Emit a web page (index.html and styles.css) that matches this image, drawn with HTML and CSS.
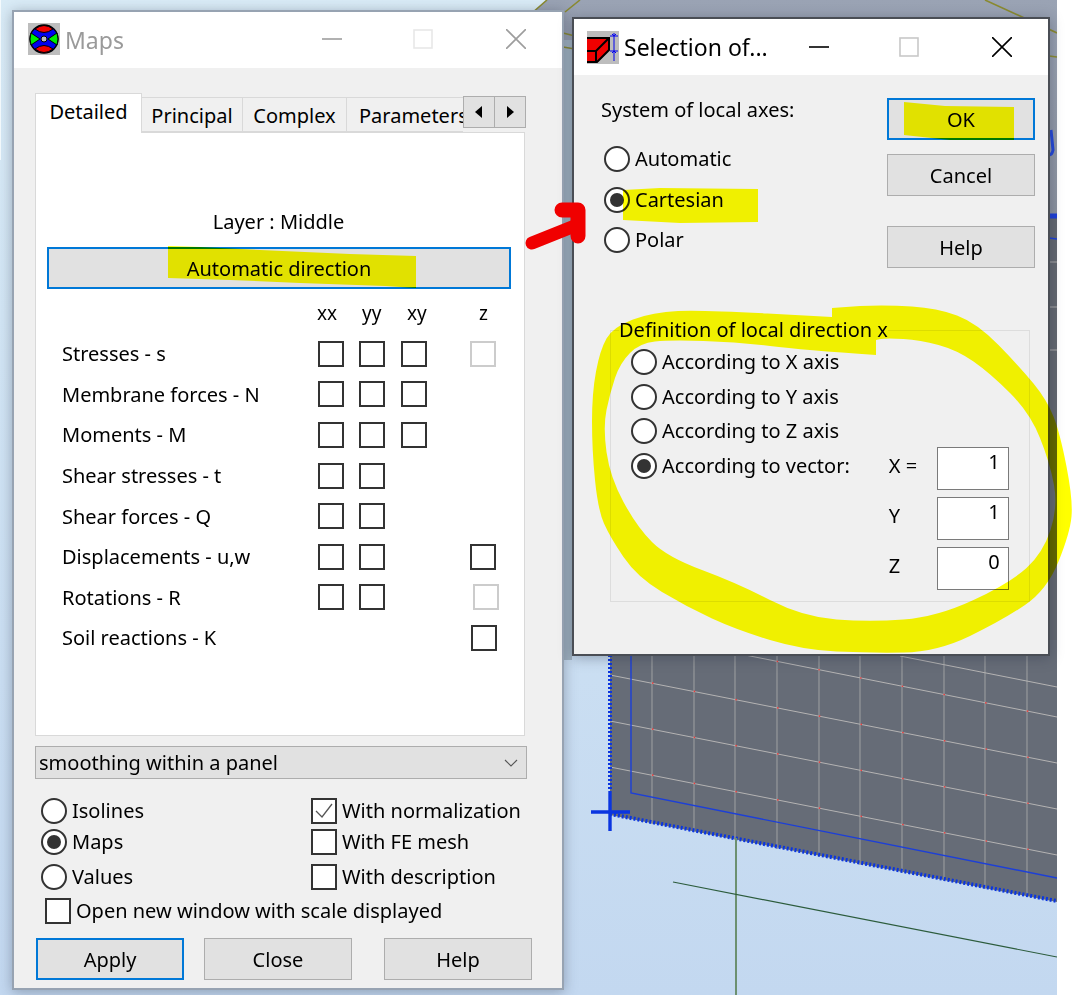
FILE: index.html
```html
<!DOCTYPE html>
<html lang="en">
<head>
<meta charset="utf-8">
<title>Maps</title>
<link rel="stylesheet" href="styles.css">
</head>
<body>
<div class="desktop">
  <svg class="scene" width="1057" height="995" viewBox="0 0 1057 995">
    <defs>
      <linearGradient id="sky" x1="0" y1="0" x2="0" y2="1">
        <stop offset="0" stop-color="#d9ebf6"/>
        <stop offset="1" stop-color="#c3d8f0"/>
      </linearGradient>
      <linearGradient id="haze" x1="0" y1="0" x2="0" y2="1">
        <stop offset="0" stop-color="#9aa3b4"/>
        <stop offset="1" stop-color="#8a919e"/>
      </linearGradient>
    </defs>
    <rect width="1057" height="995" fill="url(#sky)"/>
    <rect x="0" y="0" width="1" height="160" fill="#f4fafd"/>
    <polygon points="532,13 547,0 1057,0 1057,218 572,218 572,40 563,40 563,13" fill="url(#haze)"/>
    <rect x="563" y="40" width="9" height="620" fill="#a3b6c4"/>
    <rect x="1049" y="218" width="8" height="442" fill="#62676f"/>
    <polygon points="610,640 1057,640 1057,902 610,815" fill="#666c77"/>
    <g stroke="#8f9296" stroke-width="1.4">
      <path d="M652 650V824M694 650V832M735 650V840M777 650V849M819 650V857M860 650V865M902 650V873M944 650V881M985 650V889M1027 650V897"/>
    </g>
    <g stroke="#b4b3b3" stroke-width="1" fill="none">
      <path d="M610 675L1057 763M610 721L1057 809M610 767L1057 855M735 653L1057 717M900 656L1057 687"/>
    </g>
    <g stroke="#ee3a3a" stroke-width="1.4" fill="none" stroke-dasharray="1.5 41">
      <path d="M652 683L1057 763M652 729L1057 809M652 775L1057 855M735 653L1057 717"/>
    </g>
    <path d="M631 655V793L1057 878" stroke="#1c3fd8" stroke-width="1.4" fill="none"/>
    <path d="M610 655V790" stroke="#0a35e0" stroke-width="4" stroke-dasharray="2 2" fill="none"/>
    <path d="M610 814L1057 901" stroke="#0a35e0" stroke-width="4" stroke-dasharray="2 2" fill="none"/>
    <path d="M591 812H630M610 791V831" stroke="#0a35e0" stroke-width="3.4" fill="none"/>
    <path d="M736 838V995" stroke="#6c9070" stroke-width="2"/>
    <path d="M673 882L1057 957" stroke="#2c5c3c" stroke-width="1.2"/>
    <g stroke="#8a8a30" stroke-width="1.6" fill="none">
      <path d="M532 13L547 0M565 12L580 0M985 0L1057 33M563 33L575 36M563 47L575 49M1049 56L1057 57"/>
    </g>
    <path d="M1051 130L1053 150Q1052 155 1049 155" stroke="#2246d8" stroke-width="3" fill="none"/>
    <path d="M1049 216H1057" stroke="#1c3fd8" stroke-width="5"/>
    <path d="M1049 238L1057 239" stroke="#1c3fd8" stroke-width="1.4"/>
    <path d="M1049 262H1057M1049 307H1057M1049 350H1057" stroke="#a8a8a8" stroke-width="1"/>
  </svg>

  <section class="win win-maps">
    <header class="titlebar titlebar-idle">
      <svg class="app-icon" width="32" height="32" viewBox="0 0 32 32">
        <rect width="32" height="32" fill="#bdbdbd"/>
        <circle cx="16" cy="16" r="14" fill="#0000f0" stroke="#000" stroke-width="1.4"/>
        <path d="M7 6Q16 13 25 6Q16 -1 7 6ZM7 26Q16 19 25 26Q16 33 7 26Z" fill="#f00000" stroke="#000" stroke-width="1"/>
        <path d="M3 10L12 16L3 22Q1 16 3 10ZM29 10L20 16L29 22Q31 16 29 10Z" fill="#00ee00" stroke="#000" stroke-width="1"/>
        <circle cx="16" cy="16" r="3" fill="#bdbdbd" stroke="#000" stroke-width="1"/>
      </svg>
      <h1 class="title">Maps</h1>
      <div class="caption-btns caption-maps">
        <svg width="20" height="20" viewBox="0 0 20 20"><path d="M0 10H20" stroke="#9d9d9d" stroke-width="1.6"/></svg>
        <svg width="20" height="20" viewBox="0 0 20 20"><rect x="1" y="1" width="18" height="18" fill="none" stroke="#e8e8e8" stroke-width="1.6"/></svg>
        <svg width="20" height="20" viewBox="0 0 20 20"><path d="M0 0L20 20M20 0L0 20" stroke="#9d9d9d" stroke-width="1.6"/></svg>
      </div>
    </header>
    <div class="win-body maps-body">
      <div class="tabs">
        <div class="tab tab-active">Detailed</div>
        <div class="tab tab-principal">Principal</div>
        <div class="tab tab-complex">Complex</div>
        <div class="tab tab-params">Parameters</div>
        <div class="spin">
          <span class="spin-btn"><svg width="8" height="12" viewBox="0 0 8 12"><path d="M7 0V12L0 6Z"/></svg></span>
          <span class="spin-btn"><svg width="8" height="12" viewBox="0 0 8 12"><path d="M1 0V12L8 6Z"/></svg></span>
        </div>
      </div>
      <div class="panel">
        <p class="layer">Layer : Middle</p>
        <button class="btn btn-focus btn-wide" type="button">Automatic direction</button>
        <div class="matrix">
          <span class="mh mh-xx">xx</span><span class="mh mh-yy">yy</span><span class="mh mh-xy">xy</span><span class="mh mh-z">z</span>

          <span class="ml">Stresses - s</span><i class="cb"></i><i class="cb"></i><i class="cb"></i><i class="cb cb-off"></i>
          <span class="ml">Membrane forces - N</span><i class="cb"></i><i class="cb"></i><i class="cb"></i><b></b>
          <span class="ml">Moments - M</span><i class="cb"></i><i class="cb"></i><i class="cb"></i><b></b>
          <span class="ml">Shear stresses - t</span><i class="cb"></i><i class="cb"></i><b></b><b></b>
          <span class="ml">Shear forces - Q</span><i class="cb"></i><i class="cb"></i><b></b><b></b>
          <span class="ml">Displacements - u,w</span><i class="cb"></i><i class="cb"></i><b></b><i class="cb"></i>
          <span class="ml">Rotations - R</span><i class="cb"></i><i class="cb"></i><b></b><i class="cb cb-off cb-r"></i>
          <span class="ml">Soil reactions - K</span><b></b><b></b><b></b><i class="cb cb-k"></i>
        </div>
      </div>
      <div class="combo">
        <span>smoothing within a panel</span>
        <svg width="14" height="8" viewBox="0 0 14 8"><path d="M1 1L7 7L13 1" fill="none" stroke="#555" stroke-width="1.1"/></svg>
      </div>
      <div class="options">
        <label class="opt"><i class="rd"></i>Isolines</label>
        <label class="opt"><i class="cb"><svg width="22" height="22" viewBox="0 0 22 22"><path d="M3 11L9 17L19 4" fill="none" stroke="#555" stroke-width="1.3"/></svg></i>With normalization</label>
        <label class="opt"><i class="rd rd-on"></i>Maps</label>
        <label class="opt"><i class="cb"></i>With FE mesh</label>
        <label class="opt"><i class="rd"></i>Values</label>
        <label class="opt"><i class="cb"></i>With description</label>
      </div>
      <label class="opt opt-scale"><i class="cb"></i>Open new window with scale displayed</label>
      <div class="actions">
        <button class="btn btn-focus btn-act" type="button">Apply</button>
        <button class="btn btn-act btn-close" type="button">Close</button>
        <button class="btn btn-act btn-help" type="button">Help</button>
      </div>
    </div>
  </section>

  <section class="win win-sel">
    <header class="titlebar titlebar-sel">
      <svg class="app-icon" width="32" height="33" viewBox="0 0 32 33">
        <rect width="32" height="33" fill="#bdbdbd"/>
        <path d="M0 7H23V18L11 31H0Z" fill="#f00000"/>
        <path d="M0 7H22V19L10 31H0M0 20H9L22 7M9 20V31" fill="none" stroke="#000" stroke-width="2"/>
        <path d="M27 2V30M23 5H31M23 20H31M25 3L27 5L29 3M25 22L27 20L29 22" fill="none" stroke="#0000f0" stroke-width="1"/>
      </svg>
      <h1 class="title">Selection of...</h1>
      <div class="caption-btns caption-sel">
        <svg width="20" height="20" viewBox="0 0 20 20"><path d="M0 10H20" stroke="#000" stroke-width="1.6"/></svg>
        <svg width="20" height="20" viewBox="0 0 20 20"><rect x="1" y="1" width="18" height="18" fill="none" stroke="#c8c8c8" stroke-width="1.6"/></svg>
        <svg width="20" height="20" viewBox="0 0 20 20"><path d="M0 0L20 20M20 0L0 20" stroke="#000" stroke-width="1.6"/></svg>
      </div>
    </header>
    <div class="win-body sel-body">
      <div class="sel-top">
        <div class="axes">
          <p class="axes-title">System of local axes:</p>
          <label class="opt axes-opt"><i class="rd"></i>Automatic</label>
          <label class="opt axes-opt"><i class="rd rd-on"></i>Cartesian</label>
          <label class="opt axes-opt"><i class="rd"></i>Polar</label>
        </div>
        <div class="sel-btns">
          <button class="btn btn-focus btn-act" type="button">OK</button>
          <button class="btn btn-act" type="button">Cancel</button>
          <button class="btn btn-act btn-sel-help" type="button">Help</button>
        </div>
      </div>
      <fieldset class="group">
        <legend>Definition of local direction x</legend>
        <label class="opt dir-opt"><i class="rd"></i>According to X axis</label>
        <label class="opt dir-opt"><i class="rd"></i>According to Y axis</label>
        <label class="opt dir-opt"><i class="rd"></i>According to Z axis</label>
        <div class="vector">
          <label class="opt dir-opt"><i class="rd rd-on"></i>According to vector:</label>
          <div class="coords">
            <span class="coord-name">X =</span><span class="field">1</span>
            <span class="coord-name">Y</span><span class="field">1</span>
            <span class="coord-name">Z</span><span class="field">0</span>
          </div>
        </div>
      </fieldset>
    </div>
  </section>

  <svg class="marks" width="1073" height="995" viewBox="0 0 1073 995">
    <polygon class="hl" points="168,246 200,247 260,250 350,254 416,256 416,288 385,286 300,283 230,280 168,278"/>
    <polygon class="hl" points="904,102 945,106 1014,107 1014,140 950,140 904,135"/>
    <polygon class="hl" points="623,190 660,188 758,189 758,222 680,223 623,220"/>
    <path class="hl" fill-rule="evenodd" d="M633 319.5Q653 312 678 311Q703 310 767.5 313.5L832 317V308L860 306Q887 305 912 306.5Q937 308 957 315.5Q977 323 998.5 345Q1020 367 1033.5 383.5Q1047 400 1053.5 416.5Q1060 433 1066.5 466.5Q1073 500 1071.5 516.5Q1070 533 1058.5 561.5Q1047 590 1025 605Q1003 620 970 636Q937 652 903.5 652.5Q870 653 836.5 651.5Q803 650 770 640Q737 630 712 618.5Q687 607 662 592Q637 577 623.5 557Q610 537 604 523.5Q598 510 595 480Q592 450 592 421.5Q592 393 596 371.5Q600 350 606.5 338.5Q613 327 633 319.5Z M876 355V340L881 339Q887 338 903.5 339Q920 340 938.5 345Q957 350 973.5 361.5Q990 373 1010 393Q1030 413 1040 438Q1050 463 1054 485Q1058 507 1050.5 530Q1043 553 1026.5 568Q1010 583 973.5 600Q937 617 903.5 619.5Q870 622 836.5 619.5Q803 617 770 600Q737 583 702 570Q667 557 652 542Q637 527 623.5 502Q610 477 606.5 452Q603 427 606.5 410Q610 393 615 378Q620 363 630 353Q640 343 655 341.5Q670 340 703.5 341Q737 342 770 346Q803 350 876 355Z"/>
    <path class="arrow" d="M532 243L577 225"/>
    <path class="arrow arrow-head" d="M562 210H578V236"/>
  </svg>
</div>
</body>
</html>
```

FILE: styles.css
```css
* { box-sizing: border-box; }
html, body { margin: 0; padding: 0; background: #fff; }
body {
  font-family: "Noto Sans", "DejaVu Sans", sans-serif;
  font-size: 20px;
  color: #000;
}
.desktop { position: relative; width: 1073px; height: 995px; overflow: hidden; }
.scene { position: absolute; left: 0; top: 0; }
.marks { position: absolute; left: 0; top: 0; pointer-events: none; }
.hl { fill: #ffff00; mix-blend-mode: multiply; }
.arrow { fill: none; stroke: #f00000; stroke-width: 13px; stroke-linecap: round; stroke-linejoin: round; }
.arrow-head { stroke-width: 15px; }

.win {
  position: absolute;
  background: #f0f0f0;
  box-shadow: 0 2px 12px rgba(40, 50, 70, .35);
  display: flex;
  flex-direction: column;
}
.win-maps { left: 12px; top: 10px; width: 552px; height: 980px; border: 2px solid #97a3b2; }
.win-sel { left: 572px; top: 17px; width: 478px; height: 639px; border: 2px solid #4a4e55; }
.titlebar { background: #fff; display: flex; align-items: center; flex: none; height: 56px; }
.titlebar-idle { padding-left: 14px; }
.titlebar-idle .app-icon { margin-top: -2px; }
.titlebar-sel { padding-left: 13px; }
.title { margin: 0 0 0 5px; font-weight: 400; font-size: 23px; }
.titlebar-idle .title { color: #9a9a9a; }
.caption-btns { margin-left: auto; display: flex; padding-right: 36px; }
.caption-maps { gap: 71px; margin-top: -2px; }
.caption-sel { gap: 70px; }
.caption-btns svg:last-child { margin-left: 2px; }
.caption-sel svg:last-child { margin-left: 3px; }

.win-body { flex: 1; position: relative; }
.maps-body { padding: 25px 0 0 21px; }

.tabs { display: flex; align-items: flex-end; height: 39px; position: relative; z-index: 1; }
.tab {
  flex: none;
  height: 35px;
  padding-top: 4px;
  text-align: center;
  background: #f0f0f0;
  border: 1px solid #d9d9d9;
  border-left: 0;
  white-space: nowrap;
}
.tab-active {
  width: 107px;
  height: 40px;
  margin-bottom: -1px;
  background: #fff;
  border-left: 1px solid #d9d9d9;
  border-bottom: 0;
}
.tab-principal { width: 101px; }
.tab-complex { width: 104px; }
.tab-params { width: 116px; overflow: hidden; text-align: left; padding-left: 12px; border-right: 0; }
.spin { display: flex; flex: none; height: 32px; align-self: flex-start; margin-top: 3px; }
.spin-btn {
  width: 32px;
  height: 32px;
  background: #e1e1e1;
  border: 1px solid #adadad;
  display: flex;
  align-items: center;
  justify-content: center;
}
.spin-btn + .spin-btn { margin-left: -1px; }
.panel {
  width: 490px;
  height: 604px;
  background: #fff;
  border: 1px solid #d9d9d9;
  padding-top: 75px;
  display: flex;
  flex-direction: column;
  align-items: center;
}
.layer { margin: 0 3px 12px 0; line-height: 27px; }
.btn {
  display: flex;
  flex: none;
  align-items: center;
  justify-content: center;
  padding: 0;
  background: #e1e1e1;
  border: 1px solid #adadad;
  font: inherit;
  color: #000;
}
.btn-focus { border: 2px solid #0078d7; }
.btn-wide { width: 464px; height: 42px; margin-right: 2px; }

.matrix {
  width: 488px;
  margin-top: 4px;
  padding-left: 26px;
  display: grid;
  grid-template-columns: 256px 41px 42px 69px 26px;
  grid-auto-rows: 40.57px;
  align-items: center;
}
.ml { white-space: nowrap; }
.mh { font-size: 19px; line-height: 24px; margin-top: -1px; }
.mh-xx { grid-column: 2; margin-left: -1px; }
.mh-yy { grid-column: 3; margin-left: 3px; }
.mh-xy { grid-column: 4; margin-left: 6px; }
.mh-z { grid-column: 5; margin-left: 9px; }
.cb {
  display: flex;
  align-items: center;
  justify-content: center;
  width: 26px;
  height: 26px;
  flex: none;
  background: #fff;
  border: 2px solid #333;
}
.cb-off { border-color: #ccc; }
.cb-r { margin-left: 3px; }
.cb-k { margin-left: 1px; }
.rd {
  display: block;
  flex: none;
  width: 26px;
  height: 26px;
  border-radius: 50%;
  background: #fff;
  border: 2px solid #333;
  position: relative;
}
.rd-on::after {
  content: "";
  position: absolute;
  left: 4px;
  top: 4px;
  width: 14px;
  height: 14px;
  border-radius: 50%;
  background: #333;
}

.combo {
  width: 492px;
  height: 33px;
  margin-top: 10px;
  padding: 0 8px 0 3px;
  background: #e1e1e1;
  border: 1px solid #adadad;
  display: flex;
  align-items: center;
  justify-content: space-between;
}
.opt { display: flex; align-items: center; gap: 5px; white-space: nowrap; line-height: 26px; height: 26px; }
.options {
  margin-top: 19px;
  padding-left: 6px;
  display: grid;
  grid-template-columns: 270px auto;
  grid-template-rows: 26px 31px 35px;
  align-items: end;
}
.opt-scale { margin: 8px 0 0 10px; }
.actions { display: flex; margin: 14px 0 0 1px; }
.btn-act { width: 148px; height: 42px; }
.btn-close { margin-left: 20px; }
.btn-help { margin-left: 32px; }

.sel-body { padding: 0 13px 0 27px; }
.sel-top { display: flex; justify-content: space-between; }
.axes-title { margin: 21px 0 22px; line-height: 28px; }
.axes-opt { margin: 0 0 14.5px 3px; }
.sel-btns { display: flex; flex-direction: column; padding-top: 23px; gap: 14px; }
.btn-sel-help { margin-top: 16px; }
.group {
  margin: 0;
  padding: 1px 0 0 20px;
  width: 420px;
  height: 286px;
  min-width: 0;
  border: 1px solid #ddd;
  position: absolute;
  left: 36px;
  top: 241px;
}
.group legend { padding: 0; margin-left: -12px; line-height: 28px; }
.dir-opt { height: 34.5px; }
.vector { display: flex; align-items: flex-start; gap: 39px; }
.coords {
  display: grid;
  grid-template-columns: 48px 72px;
  grid-auto-rows: 43px;
  row-gap: 7px;
  margin-top: -2px;
  align-items: center;
}
.coord-name { margin-top: -5px; }
.field {
  height: 43px;
  background: #fff;
  border: 1px solid #7a7a7a;
  text-align: right;
  padding-right: 8px;
  line-height: 28px;
}
```
